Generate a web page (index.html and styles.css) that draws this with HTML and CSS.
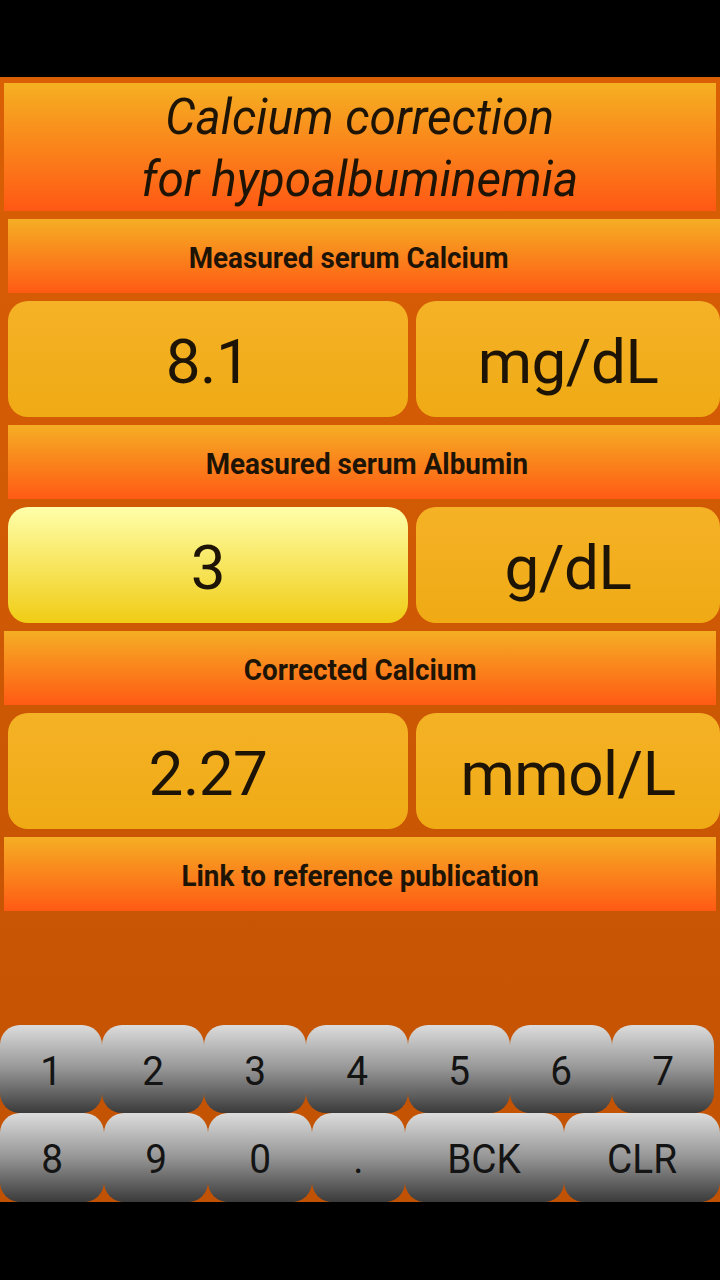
FILE: index.html
```html
<!DOCTYPE html>
<html>
<head>
<meta charset="utf-8">
<link rel="stylesheet" href="styles.css">
</head>
<body>
<div class="screen">
  <div class="status"></div>
  <div class="app">
    <div class="title"><span class="cond">Calcium correction<br>for hypoalbuminemia</span></div>
    <div class="header h-shift h1"><span class="cond">Measured serum Calcium</span></div>
    <div class="row">
      <div class="box value">8.1</div>
      <div class="box unit">mg/dL</div>
    </div>
    <div class="header h-shift h2"><span class="cond">Measured serum Albumin</span></div>
    <div class="row">
      <div class="box value active">3</div>
      <div class="box unit">g/dL</div>
    </div>
    <div class="header"><span class="cond">Corrected Calcium</span></div>
    <div class="row">
      <div class="box value">2.27</div>
      <div class="box unit">mmol/L</div>
    </div>
    <div class="header"><span class="cond">Link to reference publication</span></div>
    <div class="spacer"></div>
    <div class="keypad">
      <div class="keyrow r1">
        <div class="key"><span class="cond">1</span></div>
        <div class="key"><span class="cond">2</span></div>
        <div class="key"><span class="cond">3</span></div>
        <div class="key"><span class="cond">4</span></div>
        <div class="key"><span class="cond">5</span></div>
        <div class="key"><span class="cond">6</span></div>
        <div class="key"><span class="cond">7</span></div>
      </div>
      <div class="keyrow r2">
        <div class="key k104"><span class="cond">8</span></div>
        <div class="key k104"><span class="cond">9</span></div>
        <div class="key k104"><span class="cond">0</span></div>
        <div class="key k93"><span class="cond">.</span></div>
        <div class="key k159"><span class="cond">BCK</span></div>
        <div class="key k156"><span class="cond">CLR</span></div>
      </div>
    </div>
  </div>
  <div class="navbar"></div>
</div>
</body>
</html>
```

FILE: styles.css
```css
html, body {
  margin: 0;
  padding: 0;
  background: #000;
}
.screen {
  width: 720px;
  height: 1280px;
  display: flex;
  flex-direction: column;
  overflow: hidden;
  font-family: Roboto, "Liberation Sans", sans-serif;
  color: #1e1406;
}
.status {
  height: 77px;
  flex: none;
  background: #000;
}
.navbar {
  height: 78px;
  flex: none;
  background: #000;
}
.app {
  height: 1125px;
  flex: none;
  display: flex;
  flex-direction: column;
  background: linear-gradient(#da5f05, #c25203);
  overflow: hidden;
}
.cond {
  display: inline-block;
  transform: scaleX(0.86);
}
.title {
  margin: 6px 4px 0 4px;
  height: 128px;
  background: linear-gradient(#f5b022, #ff5814);
  text-align: center;
  font-style: italic;
  font-size: 50px;
  line-height: 62px;
  padding-top: 3px;
  box-sizing: border-box;
}
.title .cond {
  transform: scaleX(0.955);
}
.header {
  margin: 8px 4px 0 4px;
  height: 74px;
  background: linear-gradient(#f5ae24, #ff5a14);
  display: flex;
  align-items: center;
  justify-content: center;
  font-weight: bold;
  font-size: 29px;
  padding-top: 3px;
  box-sizing: border-box;
}
.header .cond {
  transform: scaleX(0.96);
}
.h-shift {
  margin-left: 8px;
  margin-right: 0;
}
.h1 { padding-right: 30px; }
.h2 { padding-left: 6px; }
.row {
  margin: 8px 0 0 8px;
  height: 116px;
  display: flex;
  gap: 8px;
}
.box {
  height: 116px;
  border-radius: 20px;
  background: linear-gradient(#f5b226, #efaa14);
  display: flex;
  align-items: center;
  justify-content: center;
  font-size: 62px;
  letter-spacing: -0.5px;
  padding-top: 4px;
  box-sizing: border-box;
}
.value {
  width: 400px;
  flex: none;
}
.unit {
  width: 304px;
  flex: none;
}
.active {
  background: linear-gradient(#ffffaa, #f0cc14);
}
.spacer {
  flex: 1;
}
.keypad {
  display: flex;
  flex-direction: column;
}
.keyrow {
  display: flex;
}
.r1 { height: 88px; }
.r2 { height: 89px; }
.key {
  border-radius: 20px;
  background: linear-gradient(#dcdcdc, #959595 50%, #3a3a3a);
  display: flex;
  align-items: center;
  justify-content: center;
  font-size: 40px;
  color: #141414;
  padding-top: 4px;
  box-sizing: border-box;
}
.key .cond {
  transform: scaleX(0.97);
}
.r1 .key {
  width: 102px;
  flex: none;
}
.k104 { width: 104px; flex: none; }
.k93 { width: 93px; flex: none; }
.k159 { width: 159px; flex: none; }
.k156 { width: 156px; flex: none; }
```
